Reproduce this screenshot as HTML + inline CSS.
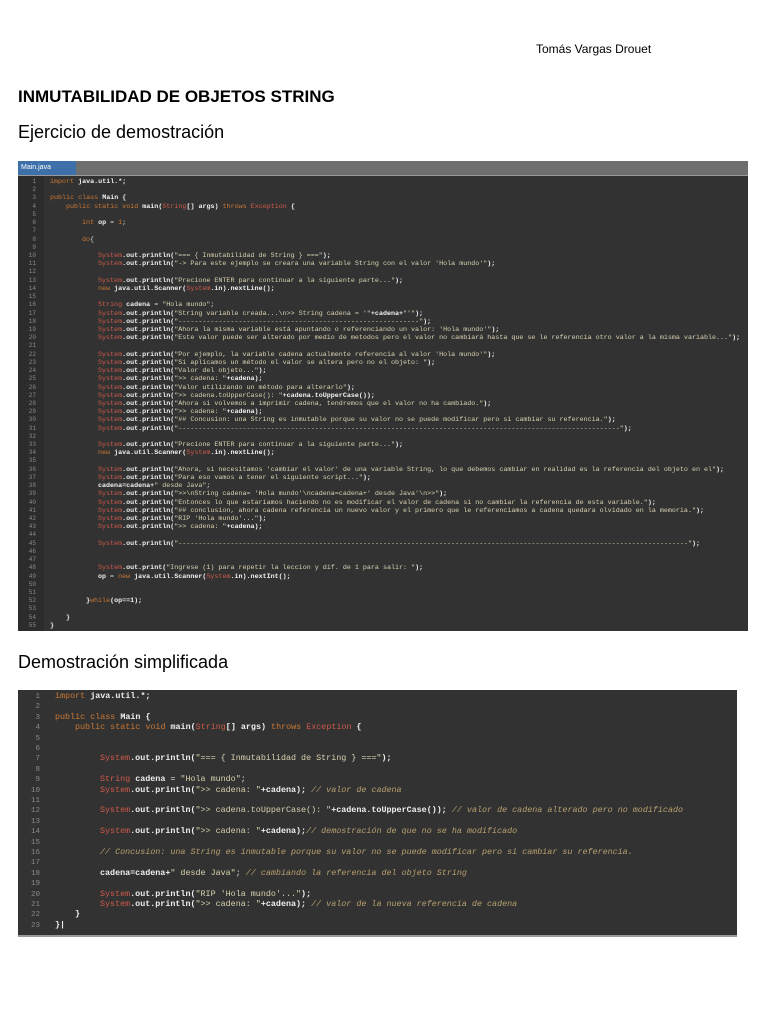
<!DOCTYPE html>
<html><head><meta charset="utf-8">
<style>
body{margin:0;width:768px;height:1024px;background:#fff;position:relative;overflow:hidden;font-family:"Liberation Sans",sans-serif;}
.t{position:absolute;color:#000;white-space:nowrap}
.p{position:absolute;background:#323232;overflow:hidden}
.ln{position:absolute;left:0;white-space:pre;font-family:"Liberation Mono",monospace;color:#ddd}
.n{display:inline-block;text-align:right;color:#8a8a8a}
.k{color:#cc7832}.s{color:#cf5a4a}.w{color:#f0f0f0;font-weight:bold}.q{color:#d8d2b0}.c{color:#b8a070;font-style:italic}
</style></head><body>
<div class="t" style="left:536px;top:42px;font-size:12px">Tomás Vargas Drouet</div>
<div class="t" style="left:18px;top:87px;font-size:17px;font-weight:bold">INMUTABILIDAD DE OBJETOS STRING</div>
<div class="t" style="left:18px;top:122px;font-size:18px">Ejercicio de demostración</div>
<div class="t" style="left:18px;top:652px;font-size:18px">Demostración simplificada</div>

<div class="p" style="left:18px;top:161px;width:730px;height:470px">
<div style="position:absolute;left:0;top:0;width:730px;height:14px;background:#6e6e6e;border-bottom:1px solid #999"></div>
<div style="position:absolute;left:0;top:0;width:58px;height:14px;background:#3d6fa8;color:#fff;font-size:7px;line-height:14px;padding-left:3px;box-sizing:border-box">Main.java</div>
<div style="position:absolute;left:0;top:15px;width:26px;height:455px;background:#2c2c2c"></div>
<div id="a"></div>
</div>

<div class="p" style="left:18px;top:690px;width:719px;height:245px;border-bottom:2px solid #999">
<div id="b"></div>
</div>

<script>
function render(id,lines,top,lh,fs,codeX,numW,chw){
 var h='';
 lines.forEach(function(l,i){
  var ind=l[0],code=l[1];
  h+='<div class="ln" style="top:'+(top+i*lh)+'px;font-size:'+fs+'px;line-height:'+lh+'px"><span class="n" style="width:'+numW+'px;font-size:'+(fs*0.9)+'px">'+(i+1)+'</span><span style="position:absolute;left:'+(codeX+ind*chw)+'px;top:0">'+code+'</span></div>';
 });
 document.getElementById(id).innerHTML=h;
}
var S='<span class="s">System</span><span class="w">.out.println(</span>';
function P(s,rest){return S+'<span class="q">"'+s+'"</span>'+(rest||'<span class="w">);</span>');}
var A=[
[0,'<span class="k">import</span> <span class="w">java.util.*;</span>'],[0,''],
[0,'<span class="k">public class</span> <span class="w">Main {</span>'],
[4,'<span class="k">public static void</span> <span class="w">main(</span><span class="s">String</span><span class="w">[] args)</span> <span class="k">throws</span> <span class="s">Exception</span> <span class="w">{</span>'],[0,''],
[8,'<span class="k">int</span> <span class="w">op</span> = <span class="k">1</span>;'],[0,''],
[8,'<span class="k">do</span>{'],[0,''],
[12,P('=== { Inmutabilidad de String } ===')],
[12,P("-> Para este ejemplo se creara una variable String con el valor 'Hola mundo'")],[0,''],
[12,P('Precione ENTER para continuar a la siguiente parte...')],
[12,'<span class="k">new</span> <span class="w">java.util.Scanner(</span><span class="s">System</span><span class="w">.in).nextLine();</span>'],[0,''],
[12,'<span class="s">String</span> <span class="w">cadena</span> = <span class="q">"Hola mundo"</span>;'],
[12,P("String variable creada...\\n>> String cadena = '",'<span class="w">+cadena+</span><span class="q">"\'"</span><span class="w">);</span>')],
[12,P('------------------------------------------------------------')],
[12,P("Ahora la misma variable está apuntando o referenciando un valor: 'Hola mundo'")],
[12,P('Este valor puede ser alterado por medio de metodos pero el valor no cambiará hasta que se le referencia otro valor a la misma variable...')],[0,''],
[12,P("Por ejemplo, la variable cadena actualmente referencia al valor 'Hola mundo'")],
[12,P('Si aplicamos un método el valor se altera pero no el objeto: ')],
[12,P('Valor del objeto...')],
[12,P('>> cadena: ','<span class="w">+cadena);</span>')],
[12,P('Valor utilizando un método para alterarlo')],
[12,P('>> cadena.toUpperCase(): ','<span class="w">+cadena.toUpperCase());</span>')],
[12,P('Ahora si volvemos a imprimir cadena, tendremos que el valor no ha cambiado.')],
[12,P('>> cadena: ','<span class="w">+cadena);</span>')],
[12,P('## Concusion: una String es inmutable porque su valor no se puede modificar pero si cambiar su referencia.')],
[12,P('--------------------------------------------------------------------------------------------------------------')],[0,''],
[12,P('Precione ENTER para continuar a la siguiente parte...')],
[12,'<span class="k">new</span> <span class="w">java.util.Scanner(</span><span class="s">System</span><span class="w">.in).nextLine();</span>'],[0,''],
[12,P("Ahora, si necesitamos 'cambiar el valor' de una variable String, lo que debemos cambiar en realidad es la referencia del objeto en el")],
[12,P('Para eso vamos a tener el siguiente script...')],
[12,'<span class="w">cadena=cadena+</span><span class="q">" desde Java"</span>;'],
[12,P(">>\\nString cadena= 'Hola mundo'\\ncadena=cadena+' desde Java'\\n>>")],
[12,P('Entonces lo que estaríamos haciendo no es modificar el valor de cadena si no cambiar la referencia de esta variable.')],
[12,P('## conclusion, ahora cadena referencia un nuevo valor y el primero que le referenciamos a cadena quedara olvidado en la memoria.')],
[12,P("RIP 'Hola mundo'...")],
[12,P('>> cadena: ','<span class="w">+cadena);</span>')],[0,''],
[12,P('-------------------------------------------------------------------------------------------------------------------------------')],[0,''],[0,''],
[12,'<span class="s">System</span><span class="w">.out.print(</span><span class="q">"Ingrese (1) para repetir la leccion y dif. de 1 para salir: "</span><span class="w">);</span>'],
[12,'<span class="w">op</span> = <span class="k">new</span> <span class="w">java.util.Scanner(</span><span class="s">System</span><span class="w">.in).nextInt();</span>'],[0,''],[0,''],
[9,'<span class="w">}</span><span class="k">while</span><span class="w">(op==1);</span>'],[0,''],
[4,'<span class="w">}</span>'],[0,'<span class="w">}</span>']
];
render('a',A,17,8.22,6.7,32,18,4);
var B=[
[0,'<span class="k">import</span> <span class="w">java.util.*;</span>'],[0,''],
[0,'<span class="k">public class</span> <span class="w">Main {</span>'],
[4,'<span class="k">public static void</span> <span class="w">main(</span><span class="s">String</span><span class="w">[] args)</span> <span class="k">throws</span> <span class="s">Exception</span> <span class="w">{</span>'],[0,''],[0,''],
[9,P('=== { Inmutabilidad de String } ===')],[0,''],
[9,'<span class="s">String</span> <span class="w">cadena</span> = <span class="q">"Hola mundo"</span>;'],
[9,P('>> cadena: ','<span class="w">+cadena);</span> <span class="c">// valor de cadena</span>')],[0,''],
[9,P('>> cadena.toUpperCase(): ','<span class="w">+cadena.toUpperCase());</span> <span class="c">// valor de cadena alterado pero no modificado</span>')],[0,''],
[9,P('>> cadena: ','<span class="w">+cadena);</span><span class="c">// demostración de que no se ha modificado</span>')],[0,''],
[9,'<span class="c">// Concusion: una String es inmutable porque su valor no se puede modificar pero si cambiar su referencia.</span>'],[0,''],
[9,'<span class="w">cadena=cadena+</span><span class="q">" desde Java"</span>; <span class="c">// cambiando la referencia del objeto String</span>'],[0,''],
[9,P("RIP 'Hola mundo'...")],
[9,P('>> cadena: ','<span class="w">+cadena);</span> <span class="c">// valor de la nueva referencia de cadena</span>')],
[4,'<span class="w">}</span>'],[0,'<span class="w">}|</span>']
];
render('b',B,1,10.4,8.4,37,22,5);
</script>
</body></html>
